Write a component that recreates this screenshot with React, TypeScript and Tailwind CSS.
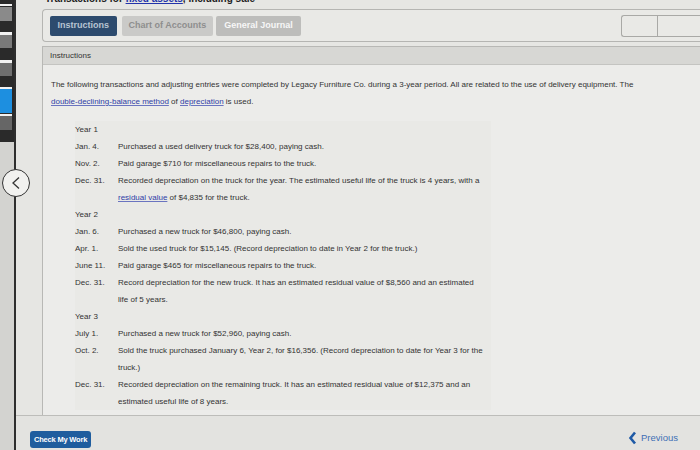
import React from "react";

const link = "text-[#2f3da6] underline decoration-[#6a74c0]";

function Row({ date, children }: { date: string; children: React.ReactNode }) {
  return (
    <div className="flex">
      <div className="w-[43px] shrink-0">{date}</div>
      <div className="w-[367px]">{children}</div>
    </div>
  );
}

function YearRow({ label }: { label: string }) {
  return <div className="h-[17px]">{label}</div>;
}

export default function App() {
  return (
    <div
      className="relative flex w-[700px] h-[450px] overflow-hidden bg-[#e6e6e3] text-[#333]"
      style={{ fontFamily: '"Liberation Sans", Arial, sans-serif' }}
    >
      {/* left strip */}
      <div className="w-[14px] shrink-0 flex flex-col">
        <div className="h-[142px] bg-[#2a2a2a] flex flex-col">
          <div className="h-[4px]" />
          <div className="h-[2px] w-[12px] bg-[#f2f2f2]" />
          <div className="h-[14px] w-[12px] bg-[#8a8a8a] mt-[1px]" />
          <div className="h-[11px]" />
          <div className="h-[3px] w-[12px] bg-[#f2f2f2]" />
          <div className="h-[13px] w-[12px] bg-[#7a7a7a]" />
          <div className="h-[12px]" />
          <div className="h-[3px] w-[12px] bg-[#f2f2f2]" />
          <div className="h-[13px] w-[12px] bg-[#6f6f6f]" />
          <div className="h-[11px]" />
          <div className="h-[2px] w-[12px] bg-[#f2f2f2]" />
          <div className="h-[24px] w-[12px] bg-[#1d8fe0]" />
          <div className="h-[2px] w-[12px] bg-[#f2f2f2] mt-[1px]" />
          <div className="h-[14px] w-[12px] bg-[#666]" />
        </div>
        <div className="flex-1 bg-[#d3d3d0]" />
      </div>
      <div className="w-[2px] shrink-0 bg-[#2e2e2e]" />

      {/* circle back button */}
      <div className="absolute left-[2px] top-[169px] w-[28px] h-[28px] rounded-full border-[1.5px] border-[#333] bg-[#f1f1ef] flex items-center justify-center">
        <svg width="12" height="14" viewBox="0 0 12 14">
          <path d="M9 1.5 L3 7 L9 12.5" fill="none" stroke="#333" strokeWidth="1.3" />
        </svg>
      </div>

      {/* main */}
      <div className="flex-1 flex flex-col min-w-0">
        <div className="pl-[14px] flex flex-col flex-1">
          {/* cut title */}
          <div className="h-[5px] overflow-hidden pl-[15px]">
            <div className="-mt-[7px] text-[10px] leading-[12px] font-bold text-[#222] whitespace-nowrap">
              Transactions for <span className="text-[#2233aa] underline">fixed assets</span>, including sale
            </div>
          </div>

          {/* tab bar */}
          <div className="ml-[12px] mt-[4px] h-[33px] border border-r-0 border-[#b5b5b2] rounded-tl-[4px] rounded-bl-[4px] bg-[#e9e9e6] flex items-center pl-[7px]">
            <div className="h-[20px] px-[7.5px] flex items-center bg-[#2d4b6e] rounded-[2px] text-[9px] font-bold text-[#b8c4d2]">
              Instructions
            </div>
            <div className="ml-[5px] h-[20px] px-[7px] flex items-center bg-[#cacac8] rounded-[2px] text-[9px] font-bold text-[#8e8e8e]">
              Chart of Accounts
            </div>
            <div className="ml-[3px] h-[20px] px-[8px] flex items-center bg-[#bdbdbb] rounded-[2px] text-[9px] font-bold text-[#f7f7f7]">
              General Journal
            </div>
            <div className="ml-auto h-[22px] w-[79px] border border-r-0 border-[#a9a9a6] rounded-l-[3px] flex">
              <div className="w-[36px] border-r border-[#a9a9a6]" />
              <div className="flex-1" />
            </div>
          </div>

          {/* panel */}
          <div className="ml-[12px] mt-[4px] flex-1 border-l border-t border-[#b8b8b5] flex flex-col bg-[#ececea]">
            <div className="h-[18px] bg-[#d7d7d4] border-b border-[#c4c4c1] flex items-center pl-[7px] text-[8px] text-[#333]">
              Instructions
            </div>
            <div className="pl-[8px] pt-[11px] text-[8px] leading-[17px] text-[#333]">
              <p className="w-[590px]">
                The following transactions and adjusting entries were completed by Legacy Furniture Co. during a 3-year period. All are related to the use of delivery equipment. The{" "}
                <span className={link}>double-declining-balance method</span> of{" "}
                <span className={link}>depreciation</span> is used.
              </p>
              <div className="ml-[24px] mt-[11px] w-[416px] bg-[#e9e9e6]">
                <YearRow label="Year 1" />
                <Row date="Jan. 4.">Purchased a used delivery truck for $28,400, paying cash.</Row>
                <Row date="Nov. 2.">Paid garage $710 for miscellaneous repairs to the truck.</Row>
                <Row date="Dec. 31.">
                  Recorded depreciation on the truck for the year. The estimated useful life of the truck is 4 years, with a{" "}
                  <span className={link}>residual value</span> of $4,835 for the truck.
                </Row>
                <YearRow label="Year 2" />
                <Row date="Jan. 6.">Purchased a new truck for $46,800, paying cash.</Row>
                <Row date="Apr. 1.">Sold the used truck for $15,145. (Record depreciation to date in Year 2 for the truck.)</Row>
                <Row date="June 11.">Paid garage $465 for miscellaneous repairs to the truck.</Row>
                <Row date="Dec. 31.">
                  Record depreciation for the new truck. It has an estimated residual value of $8,560 and an estimated life of 5 years.
                </Row>
                <YearRow label="Year 3" />
                <Row date="July 1.">Purchased a new truck for $52,960, paying cash.</Row>
                <Row date="Oct. 2.">
                  Sold the truck purchased January 6, Year 2, for $16,356. (Record depreciation to date for Year 3 for the truck.)
                </Row>
                <Row date="Dec. 31.">
                  Recorded depreciation on the remaining truck. It has an estimated residual value of $12,375 and an estimated useful life of 8 years.
                </Row>
              </div>
            </div>
          </div>
        </div>

        {/* footer */}
        <div className="h-[35px] shrink-0 border-t border-[#bdbdba] bg-[#e3e3e0] flex items-end justify-between pb-[2px] pl-[14px] pr-[22px]">
          <div className="h-[17px] px-[4px] rounded-[3px] bg-[#1f5d9e] flex items-center text-[7.5px] font-bold text-white tracking-[-0.2px]">
            Check My Work
          </div>
          <div className="flex items-center gap-[4px] mb-[3px]">
            <svg width="9" height="14" viewBox="0 0 9 14">
              <path d="M7 1.5 L2.5 7 L7 12.5" fill="none" stroke="#1f5aa6" strokeWidth="2.6" />
            </svg>
            <span className="text-[9.5px] text-[#3f6fb5]">Previous</span>
          </div>
        </div>
      </div>
    </div>
  );
}
